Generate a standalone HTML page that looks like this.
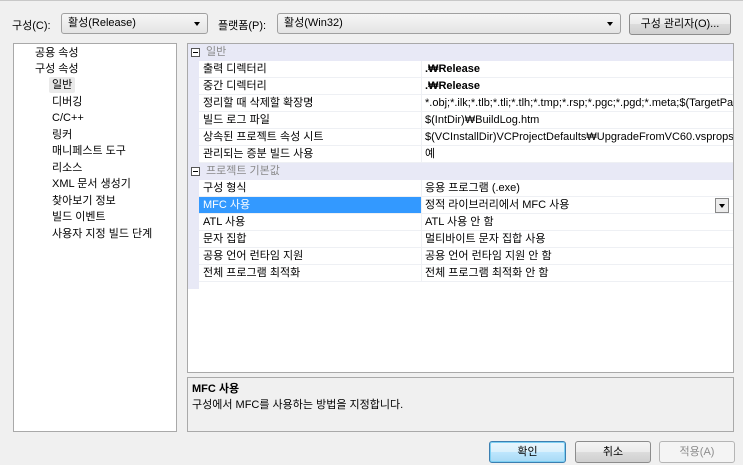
<!DOCTYPE html>
<html><head><meta charset="utf-8"><style>
*{box-sizing:border-box;margin:0;padding:0}
body{width:743px;height:465px;background:#f0f0f0;font-family:"Liberation Sans","Noto Sans CJK KR","NanumGothic",sans-serif;font-size:11px;color:#000;position:relative;overflow:hidden;border-top:1px solid #c8c8c8}
.abs{position:absolute}
.combo{position:absolute;height:21px;border:1px solid #a0a0a0;border-radius:3px;background:linear-gradient(#f6f6f6,#e4e4e4);padding:2px 6px;line-height:15px}
.combo .arr{position:absolute;right:7px;top:8px;border-left:3px solid transparent;border-right:3px solid transparent;border-top:4px solid #000}
.btn{position:absolute;height:22px;border:1px solid #8c8c8c;border-radius:3px;background:linear-gradient(#f4f4f4 0,#ebebeb 50%,#dcdcdc 51%,#cfcfcf);text-align:center;line-height:20px}
.tree{left:13px;top:42px;width:164px;height:389px;background:#fff;border:1px solid #a9a9a9}
.tree div{position:absolute;white-space:nowrap;height:16px;line-height:16px}
.grid{left:187px;top:42px;width:547px;height:330px;background:#fff;border:1px solid #a9a9a9}
.row{position:absolute;left:0;width:545px;height:17px;line-height:16px;white-space:nowrap}
.hdr{background:#e8e9f6;color:#8a8a8a;padding-left:18px}
.hdr .box{position:absolute;left:3px;top:4px;width:9px;height:9px;border:1px solid #555;background:#fff}
.hdr .box:after{content:"";position:absolute;left:1px;top:3px;width:5px;height:1px;background:#000}
.c1{position:absolute;left:11px;width:223px;height:17px;padding-left:4px;border-bottom:1px solid #eef0f4;border-right:1px solid #eef0f4}
.c2{position:absolute;left:234px;width:311px;height:17px;padding-left:3px;border-bottom:1px solid #eef0f4;overflow:hidden}
.gut{position:absolute;left:0;top:0;width:11px;height:100%;background:#e8e9f6}
.desc{left:187px;top:376px;width:547px;height:55px;border:1px solid #a9a9a9;background:#f0f0f0;padding:3px 4px;line-height:16px}
</style></head><body>
<div class="abs" style="left:12px;top:16px">구성(C):</div>
<div class="combo" style="left:61px;top:12px;width:147px">활성(Release)<span class="arr"></span></div>
<div class="abs" style="left:218px;top:16px">플랫폼(P):</div>
<div class="combo" style="left:277px;top:12px;width:344px">활성(Win32)<span class="arr"></span></div>
<div class="btn" style="left:629px;top:12px;width:102px;height:22px">구성 관리자(O)...</div>

<div class="abs tree">
<div style="left:21px;top:1px">공용 속성</div>
<div style="left:21px;top:17px">구성 속성</div>
<div style="left:35px;top:33px;background:#eaeaea;border-radius:2px;padding:0 3px">일반</div>
<div style="left:38px;top:50px">디버깅</div>
<div style="left:38px;top:66px">C/C++</div>
<div style="left:38px;top:83px">링커</div>
<div style="left:38px;top:99px">매니페스트 도구</div>
<div style="left:38px;top:116px">리소스</div>
<div style="left:38px;top:132px">XML 문서 생성기</div>
<div style="left:38px;top:149px">찾아보기 정보</div>
<div style="left:38px;top:165px">빌드 이벤트</div>
<div style="left:38px;top:182px">사용자 지정 빌드 단계</div>
</div>

<div class="abs grid">
<div class="gut" style="height:245px"></div>
<div class="row hdr" style="top:0"><span class="box"></span>일반</div>
<div class="row" style="top:17px"><div class="c1">출력 디렉터리</div><div class="c2"><b>.₩Release</b></div></div>
<div class="row" style="top:34px"><div class="c1">중간 디렉터리</div><div class="c2"><b>.₩Release</b></div></div>
<div class="row" style="top:51px"><div class="c1">정리할 때 삭제할 확장명</div><div class="c2">*.obj;*.ilk;*.tlb;*.tli;*.tlh;*.tmp;*.rsp;*.pgc;*.pgd;*.meta;$(TargetPat</div></div>
<div class="row" style="top:68px"><div class="c1">빌드 로그 파일</div><div class="c2">$(IntDir)₩BuildLog.htm</div></div>
<div class="row" style="top:85px"><div class="c1">상속된 프로젝트 속성 시트</div><div class="c2">$(VCInstallDir)VCProjectDefaults₩UpgradeFromVC60.vsprops</div></div>
<div class="row" style="top:102px"><div class="c1">관리되는 증분 빌드 사용</div><div class="c2">예</div></div>
<div class="row hdr" style="top:119px"><span class="box"></span>프로젝트 기본값</div>
<div class="row" style="top:136px"><div class="c1">구성 형식</div><div class="c2">응용 프로그램 (.exe)</div></div>
<div class="row" style="top:153px"><div class="c1" style="background:#3399ff;color:#fff">MFC 사용</div><div class="c2">정적 라이브러리에서 MFC 사용<span style="position:absolute;right:4px;top:1px;width:14px;height:15px;border:1px solid #888;background:#ececec"><span style="position:absolute;left:3px;top:5px;border-left:3px solid transparent;border-right:3px solid transparent;border-top:4px solid #000"></span></span></div></div>
<div class="row" style="top:170px"><div class="c1">ATL 사용</div><div class="c2">ATL 사용 안 함</div></div>
<div class="row" style="top:187px"><div class="c1">문자 집합</div><div class="c2">멀티바이트 문자 집합 사용</div></div>
<div class="row" style="top:204px"><div class="c1">공용 언어 런타임 지원</div><div class="c2">공용 언어 런타임 지원 안 함</div></div>
<div class="row" style="top:221px"><div class="c1">전체 프로그램 최적화</div><div class="c2">전체 프로그램 최적화 안 함</div></div>
</div>

<div class="abs desc"><b>MFC 사용</b><br>구성에서 MFC를 사용하는 방법을 지정합니다.</div>

<div class="btn" style="left:489px;top:440px;width:77px;border-color:#3c7fb1;background:linear-gradient(#eaf6fd 0,#d9f0fc 50%,#bee6fd 51%,#a7d9f5);box-shadow:inset 0 0 0 1px #7ed0f3">확인</div>
<div class="btn" style="left:575px;top:440px;width:76px">취소</div>
<div class="btn" style="left:659px;top:440px;width:76px;color:#8d8d8d;border-color:#b5b5b5;background:#f4f4f4">적용(A)</div>
</body></html>
